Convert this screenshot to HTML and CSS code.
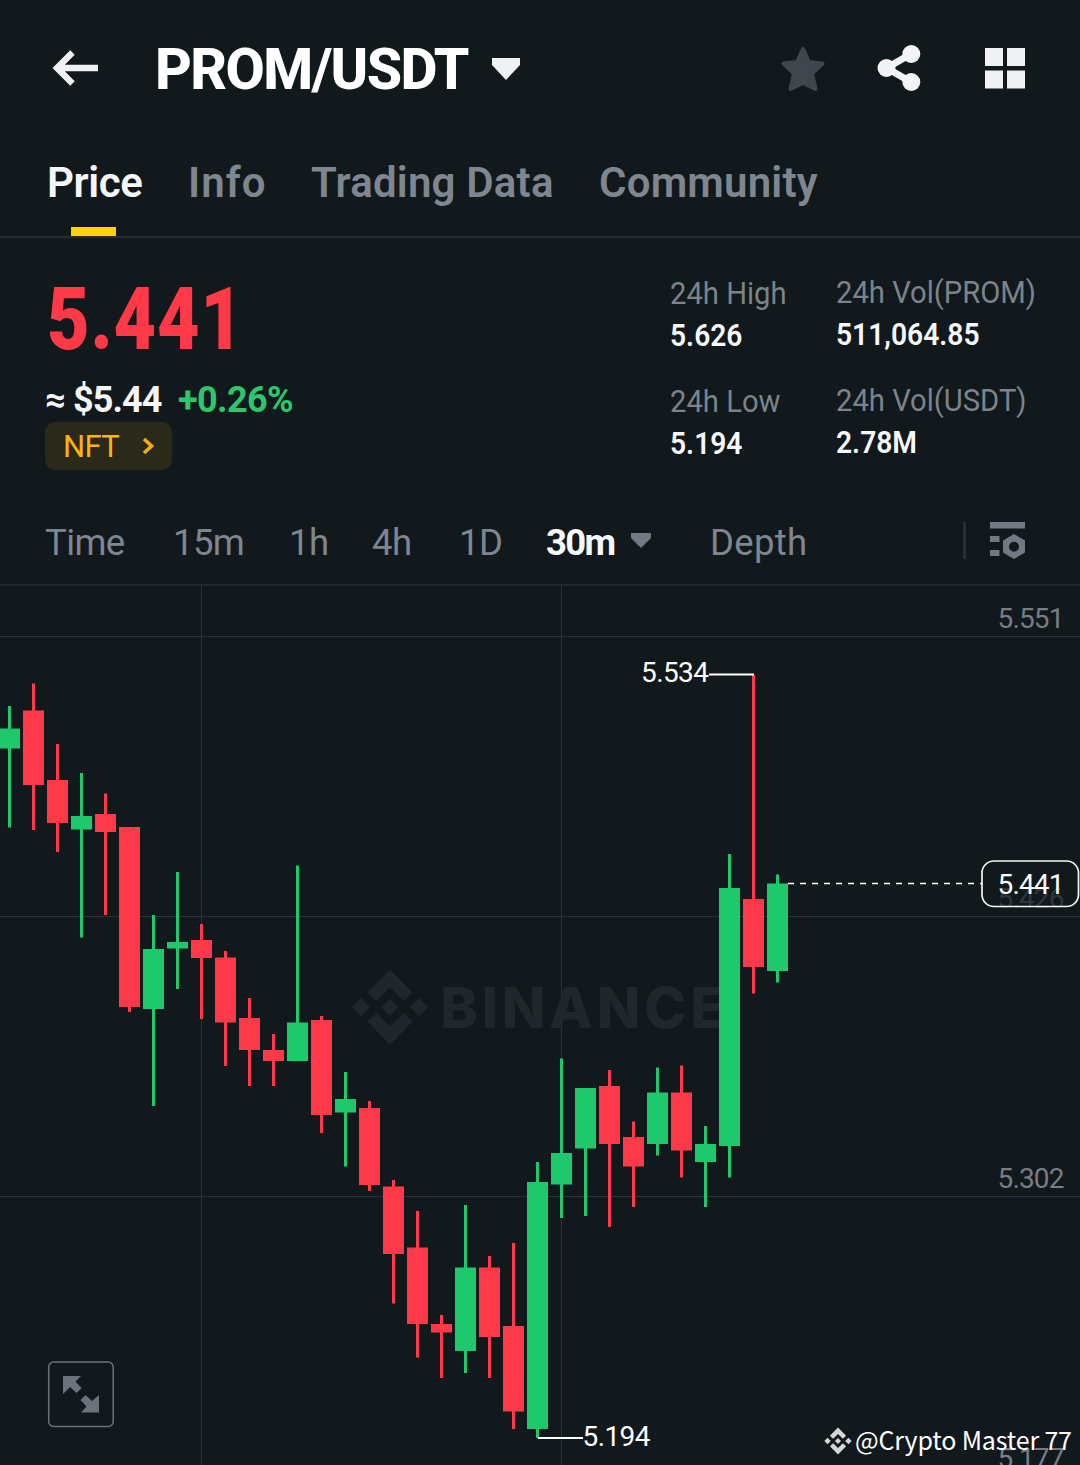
FILE: index.html
```html
<!DOCTYPE html>
<html lang="en">
<head>
<meta charset="utf-8">
<title>PROM/USDT</title>
<link rel="stylesheet" href="styles.css">
</head>
<body>
<header class="header">
  <svg class="back" width="48" height="38" viewBox="0 0 48 38"><path d="M46 19H5M20.500 3.500L5 19l15.500 15.500" fill="none" stroke="#f0f1f5" stroke-width="6.400"/></svg>
  <h1 class="pair">PROM/USDT</h1>
  <svg class="caret" width="28" height="22" viewBox="0 0 28 22"><path d="M0 0h28v7L14 22 0 7z" fill="#f0f1f5"/></svg>
  <div class="actions">
    <svg width="46" height="48" viewBox="0 0 46 48"><path d="M24 4l6 13 13.500 1.500-10.500 10 3.500 15.500L24 38 11.500 44l3.500-15.500-10.500-10L18 17z" fill="#40464e" stroke="#40464e" stroke-width="4" stroke-linejoin="round"/></svg>
    <svg width="44" height="48" viewBox="0 0 44 48"><g fill="#f2f3f7"><circle cx="9.500" cy="23" r="9"/><circle cx="34.300" cy="9" r="9"/><circle cx="34.300" cy="37" r="9"/></g><path d="M34 9L9.500 23 34 37" fill="none" stroke="#f2f3f7" stroke-width="7"/></svg>
    <svg width="40" height="42" viewBox="0 0 40 42"><path d="M0 0h18v18H0zM22 0h18v18H22zM0 22.500h18v18H0zM22 22.500h18v18H22z" fill="#f0f1f5"/></svg>
  </div>
</header>
<nav class="tabs">
  <a class="tab active">Price</a>
  <a class="tab info">Info</a>
  <a class="tab">Trading Data</a>
  <a class="tab">Community</a>
</nav>
<section class="summary">
  <div class="quote">
    <div class="last">5.441</div>
    <div class="fiat"><span class="usd">≈ $5.44</span><span class="change">+0.26%</span></div>
    <div class="tag"><span>NFT</span><svg width="12" height="18" viewBox="0 0 12 18"><path d="M2 2l7.500 7L2 16" fill="none" stroke="#f0ab18" stroke-width="3.600"/></svg></div>
  </div>
  <dl class="stats">
    <div class="stat"><dt>24h High</dt><dd>5.626</dd></div>
    <div class="stat up"><dt>24h Vol(PROM)</dt><dd>511,064.85</dd></div>
    <div class="stat"><dt>24h Low</dt><dd>5.194</dd></div>
    <div class="stat up"><dt>24h Vol(USDT)</dt><dd>2.78M</dd></div>
  </dl>
</section>
<div class="intervals">
  <span>Time</span><span>15m</span><span>1h</span><span>4h</span><span>1D</span><span class="on">30m</span>
  <svg width="20" height="16" viewBox="0 0 20 16"><path d="M0 0h20v5L10 15 0 5z" fill="#717983"/></svg>
  <span class="depth">Depth</span>
  <i class="divider"></i>
  <svg width="36" height="37" viewBox="0 0 36 37"><path d="M1 0h35v6.500H1zM1 14h9.500v6H1zM1 28h9.500v6H1z" fill="#717983"/><path fill-rule="evenodd" d="M25 12l11 6.500v12L25 37l-11-6.500v-12zM25 19.800a5 5 0 1 0 0 10 5 5 0 1 0 0-10z" fill="#717983"/></svg>
</div>
<main class="chart">
  <svg width="1080" height="879" viewBox="0 586 1080 879">
    <defs>
      <g id="logo"><path d="M-22.500-14.500L0-37.500l22.500 23-9 8.500L0-19.500-13.500-6zM-22.500 14.500L0 37.500l22.500-23-9-8.500L0 19.500-13.500 6zM-38 0l9-9 9 9-9 9zM20 0l9-9 9 9-9 9zM-8.500 0L0-8.500 8.500 0 0 8.500z"/></g>
    </defs>
    <path class="grid" d="M0 636.500h1080M0 916.500h1080M0 1196.500h1080M201.500 586v879M561.500 586v879"/>
    <g class="brand"><use href="#logo" x="390" y="1007"/><text x="440" y="1028" textLength="285">BINANCE</text></g>
    <g class="axis"><text x="997.500" y="628" textLength="67">5.551</text><text x="997.500" y="1188" textLength="67">5.302</text><text x="997.500" y="1468" textLength="67">5.177</text><text class="faint" x="997.500" y="908" textLength="67">5.426</text></g>
    <g id="candles"></g>
    <path class="mark" d="M709 674.500h45M538 1438h45"/>
    <path class="mark dash" d="M788 883.500h194"/>
    <text class="note" x="641" y="682" textLength="68">5.534</text>
    <text class="note" x="582.500" y="1446" textLength="68">5.194</text>
    <rect class="pill" x="982" y="861" width="96.500" height="45.500" rx="12"/>
    <text class="note" x="997.500" y="894" textLength="67">5.441</text>
    <rect class="button" x="48.700" y="1362" width="64.500" height="64.500" rx="5"/>
    <path class="arrows" d="M63 1376h18l-5.500 5.500 6 6.500-5 5-6.500-6-7 7zM99 1412.500H81l5.500-6-6-6.500 5-5 6.500 6 7-6z"/>
    <use class="credit" href="#logo" transform="translate(838 1441) scale(.36)"/>
    <text class="handle" x="855" y="1450" textLength="217">@Crypto Master 77</text>
  </svg>
</main>
<script src="chart.js"></script>
</body>
</html>
```
FILE: styles.css
```css
* { box-sizing: border-box; }
body { margin: 0; background: #11191c; color: #f5f6fa; font-family: Roboto, "Liberation Sans", sans-serif; width: 1080px; height: 1465px; overflow: hidden; }
svg { display: block; flex: none; }
.header { height: 138px; padding: 0 55px 0 52px; display: flex; align-items: center; }
.back { margin-top: -2px; }
.caret { margin-top: -1px; }
.pair { margin: 2px 0 0 55px; width: 337px; font-size: 57px; font-weight: 800; line-height: 64px; color: #fff; letter-spacing: -1.600px; white-space: nowrap; }
.actions { margin-left: auto; display: flex; align-items: center; gap: 52px; }
.actions svg:last-child { margin: -1px 0 0 12px; }
.tabs { height: 100px; display: grid; grid-template-columns: 141px 123px 288px 300px; padding-left: 47px; border-bottom: 2px solid #262d30; font-size: 42px; font-weight: 600; color: #7f868f; line-height: 90px; letter-spacing: .2px; white-space: nowrap; }
.active { color: #f5f6fa; position: relative; letter-spacing: -.4px; }
.info { letter-spacing: 1.100px; }
.active::after { content: ""; position: absolute; left: 24px; bottom: 0; width: 45px; height: 9px; background: #fdd20b; }
.summary { height: 259px; display: flex; }
.quote { width: 625px; padding: 30px 0 0 45px; }
.last { height: 101px; margin-left: 2px; line-height: 102px; font-size: 87px; font-weight: 900; letter-spacing: 1px; color: #ff3947; transform: scaleX(.845); transform-origin: 0 0; }
.fiat { display: flex; height: 53px; line-height: 63px; font-size: 36px; font-weight: 700; letter-spacing: -.6px; }
.usd { width: 133px; white-space: nowrap; letter-spacing: -.9px; }
.change { color: #2cc66f; }
.tag { width: 127px; height: 48px; border-radius: 10px; background: #2b2919; display: flex; align-items: center; justify-content: space-between; padding: 0 18px; font-size: 31px; letter-spacing: -.7px; color: #f8b50c; }
.stats { margin: 0; padding: 35px 0 0 45px; display: grid; grid-template-columns: 166px 220px; grid-auto-rows: 108px; font-size: 31px; line-height: 42px; white-space: nowrap; }
.stats dt { color: #7c838a; transform: scaleX(.942); transform-origin: 0 0; }
.stats dd { margin: 0; color: #f7f8fa; font-weight: 600; transform: scaleX(.91); transform-origin: 0 0; }
.up { margin-top: -1px; }
.intervals { height: 89px; border-bottom: 2px solid #20272c; display: grid; grid-template-columns: 128px 116px 83px 87px 87px 84px 79px 253px 26px 50px; padding-left: 46px; align-items: center; font-size: 36.500px; letter-spacing: -.6px; color: #7f868f; line-height: 60px; white-space: nowrap; }
.intervals span { padding-top: 4px; margin-left: -1px; }
.intervals .on { color: #f7f8fc; font-weight: 700; letter-spacing: -1.700px; }
.intervals .depth { letter-spacing: .3px; margin-left: 0; }
.divider { width: 3px; height: 37px; background: #282f34; }
.chart { height: 879px; }
.grid { stroke: #2b3236; fill: none; }
.brand { fill: #20262a; }
.brand text { font: 800 57px Inter, sans-serif; }
.axis { fill: #777d82; font-size: 28px; }
.axis .faint { fill: #30363a; }
.note { fill: #fff; font-size: 28px; }
.rise { fill: #1ec86d; }
.fall { fill: #ff3947; }
.mark { stroke: #fff; stroke-width: 1.800; fill: none; }
.dash { stroke-dasharray: 6 6; stroke-width: 1.500; }
.pill { fill: none; stroke: #f5f6f7; stroke-width: 1.700; }
.button { fill: none; stroke: #6b727a; stroke-width: 1.500; }
.arrows { fill: #6b727c; }
.credit { fill: #d5d6d8; }
.handle { fill: #fff; font: 400 25px "Noto Sans CJK SC", sans-serif; }
```
FILE: chart.js
```js
// Each entry: direction, wick top, body top, body bottom, wick bottom
const candles = [
  ["rise", 706, 728.5, 748.5, 827.5], ["fall", 683.5, 710.5, 785, 830], ["fall", 744, 780, 823, 852],
  ["rise", 773, 816, 829.5, 937.5], ["fall", 793.5, 814, 832, 915], ["fall", 827, 827, 1007, 1012],
  ["rise", 915, 949, 1009, 1106], ["rise", 872, 942, 948.5, 989], ["fall", 924, 940, 958, 1019],
  ["fall", 951, 957.5, 1022.5, 1066], ["fall", 998, 1018, 1050, 1086], ["fall", 1034, 1050, 1061, 1086],
  ["rise", 865.5, 1022.5, 1061, 1061], ["fall", 1016, 1020, 1115, 1133], ["rise", 1072, 1099, 1112.5, 1166.5],
  ["fall", 1101, 1108, 1185, 1191], ["fall", 1180, 1186.5, 1254, 1303.5], ["fall", 1211, 1247.5, 1324, 1357.5],
  ["fall", 1315, 1324, 1332.5, 1378], ["rise", 1205, 1267.5, 1351, 1373], ["fall", 1256, 1267.5, 1337, 1378],
  ["fall", 1243, 1326, 1411.5, 1429], ["rise", 1162, 1182, 1429, 1438], ["rise", 1058.5, 1153, 1184.5, 1218],
  ["rise", 1088, 1088, 1148.5, 1216], ["fall", 1070, 1086, 1144, 1227], ["fall", 1121.5, 1137, 1166.5, 1207],
  ["rise", 1067.5, 1092.5, 1144, 1155.5], ["fall", 1065.5, 1092.5, 1150.5, 1177.5], ["rise", 1126, 1144, 1162, 1207],
  ["rise", 854, 888, 1146, 1177.5], ["fall", 675, 899, 967, 993.5], ["rise", 874.5, 883.5, 971, 982.5]
];
document.getElementById("candles").innerHTML = candles.map(([dir, high, top, bottom, low], i) => {
  const x = 9.5 + i * 24;
  return `<path class="${dir}" d="M${x - 10.5} ${top}h21V${bottom}h-21zM${x - 1.5} ${high}h3V${low}h-3z"/>`;
}).join("");
```
